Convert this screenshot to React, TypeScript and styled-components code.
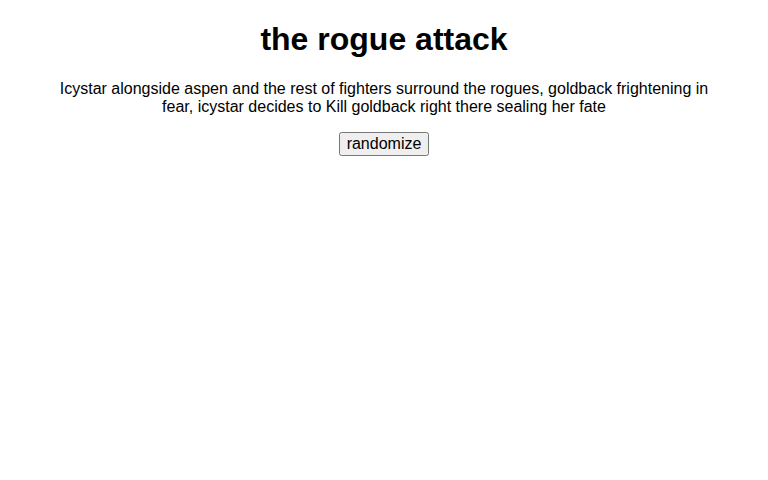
import React, { useState } from 'react';
import styled, { createGlobalStyle } from 'styled-components';

const GlobalStyle = createGlobalStyle`
    body {
        margin: 0;
        font-family: "Liberation Sans", Arial, sans-serif;
        background: #fff;
        color: #000;
    }
`;

const Page = styled.div`
    text-align: center;
    padding: 0 58px;
`;

const Title = styled.h1`
    font-size: 32px;
    font-weight: 700;
    margin: 0.67em 0;
`;

const Story = styled.p`
    font-size: 16px;
    margin: 1em 0;
`;

const Button = styled.button`
    font-family: "Liberation Sans", Arial, sans-serif;
    font-size: 16px;
`;

const stories = [
    'Icystar alongside aspen and the rest of fighters surround the rogues, goldback frightening in fear, icystar decides to Kill goldback right there sealing her fate',
];

const App = () => {
    const [index, setIndex] = useState(0);

    return (
        <Page>
            <GlobalStyle />
            <Title>the rogue attack</Title>
            <Story>{stories[index]}</Story>
            <Button onClick={() => setIndex(Math.floor(Math.random() * stories.length))}>
                randomize
            </Button>
        </Page>
    );
};

export default App;
